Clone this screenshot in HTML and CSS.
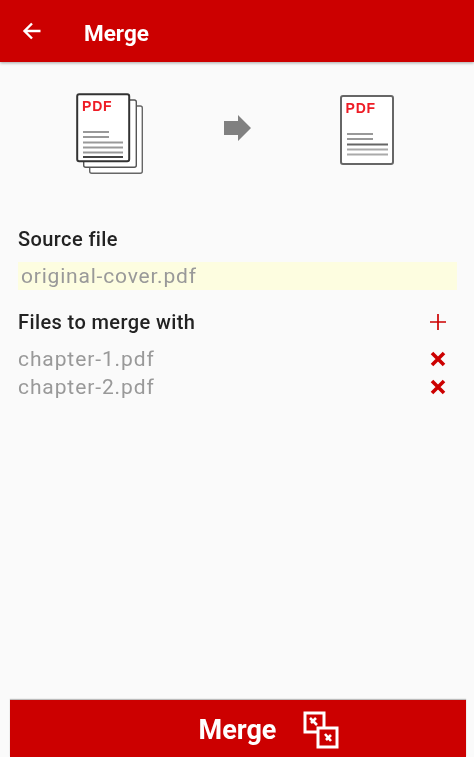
FILE: index.html
```html
<!DOCTYPE html>
<html lang="en">
<head>
<meta charset="utf-8">
<title>Merge</title>
<link rel="stylesheet" href="styles.css">
</head>
<body>
<div class="page">
  <header class="appbar">
    <svg class="back" viewBox="0 0 20 20" width="20" height="20"><path d="M18.500 10H3M10 2.500L2.500 10l7.500 7.500" fill="none" stroke="#fff" stroke-width="2.400"/></svg>
    <h1 class="title">Merge</h1>
  </header>
  <main class="content">
    <div class="diagram">
      <svg class="stack" viewBox="0 0 68 82" width="68" height="82">
        <rect x="13.700" y="13" width="52.600" height="67.200" rx="2" fill="#fff" stroke="#666" stroke-width="1.400"/>
        <rect x="7.700" y="7" width="52.600" height="67.200" rx="2" fill="#fff" stroke="#555" stroke-width="1.400"/>
        <rect x="1.200" y="1.200" width="52" height="67" rx="2" fill="#fff" stroke="#333" stroke-width="2"/>
        <text class="pdf" x="6" y="18">PDF</text>
        <path d="M7 39h26M7 44h26M7 49.500h40M7 54.500h40" stroke="#999" stroke-width="2.200"/>
        <path d="M7 59.500h40" stroke="#999" stroke-width="2"/>
        <path d="M7 64h40" stroke="#444" stroke-width="1.800"/>
      </svg>
      <svg class="arrow" viewBox="0 0 28 82" width="28" height="82">
        <path d="M0 28h14v-6l13 13-13 13v-6H0z" fill="#808080"/>
      </svg>
      <svg class="single" viewBox="0 0 54 82" width="54" height="82">
        <rect x="1" y="3" width="52" height="68" rx="2" fill="#fff" stroke="#666" stroke-width="2"/>
        <text class="pdf" x="5.500" y="20">PDF</text>
        <path d="M7 41h26M7 46h26" stroke="#999" stroke-width="2"/>
        <path d="M7 51.500h41" stroke="#666" stroke-width="2"/>
        <path d="M7 56.500h41M7 61.500h41" stroke="#aaa" stroke-width="2.200"/>
      </svg>
    </div>
    <section class="source">
      <h2 class="label">Source file</h2>
      <div class="source-file">original-cover.pdf</div>
    </section>
    <section class="files">
      <div class="row">
        <h2 class="label">Files to merge with</h2>
        <svg class="icon" viewBox="0 0 16 16" width="16" height="16"><path d="M8 0v16M0 8h16" stroke="#cc0000" stroke-width="1.700"/></svg>
      </div>
      <div class="row file">
        <span>chapter-1.pdf</span>
        <svg class="icon" viewBox="0 0 16 16" width="16" height="16"><path d="M2 2l12 12M14 2L2 14" stroke="#cc0000" stroke-width="3.600"/></svg>
      </div>
      <div class="row file">
        <span>chapter-2.pdf</span>
        <svg class="icon" viewBox="0 0 16 16" width="16" height="16"><path d="M2 2l12 12M14 2L2 14" stroke="#cc0000" stroke-width="3.600"/></svg>
      </div>
    </section>
  </main>
  <button class="merge" type="button">
    <span>Merge</span>
    <svg viewBox="0 0 36 38" width="36" height="38" fill="none" stroke="#fff">
      <rect x="2" y="2" width="19" height="19" stroke-width="3"/>
      <rect x="15" y="17" width="19" height="19" fill="#cc0000" stroke-width="3"/>
      <path d="M7 7l7 7M8 12l5-5M22 23l6 7M23 29l5-5" stroke-width="2.600"/>
    </svg>
  </button>
</div>
</body>
</html>
```
FILE: styles.css
```css
* { box-sizing: border-box; }
html, body { margin: 0; height: 100%; }
body { background: #fafafa; overflow: hidden; }
.page {
  height: 757px;
  display: flex;
  flex-direction: column;
  font-family: Roboto, "Liberation Sans", sans-serif;
  filter: blur(0.7px);
}
.appbar {
  height: 62px;
  flex: none;
  display: flex;
  align-items: center;
  gap: 42px;
  padding: 0 0 0 22px;
  background: #cc0000;
  box-shadow: 0 1px 3px rgba(0, 0, 0, 0.35);
}
.back { margin-top: -1px; }
.title {
  margin: 4px 0 0;
  color: #fff;
  font-size: 22.500px;
  font-weight: 700;
  line-height: 62px;
}
.content { flex: 1; padding: 31px 17px 0 18px; }
.diagram {
  display: flex;
  gap: 80px;
  margin: 0 0 0 58px;
  height: 82px;
}
.single { margin-left: 8px; }
.pdf { font: 700 14px "Liberation Sans", sans-serif; fill: #ee1c25; letter-spacing: 0.800px; }
.source { margin-top: 53px; }
.label {
  margin: 0;
  font-size: 20px;
  line-height: 22px;
  font-weight: 500;
  letter-spacing: 0.400px;
  color: #222;
}
.source-file {
  height: 28px;
  margin-top: 12px;
  padding-left: 3px;
  background: #fdfde0;
  color: #999;
  font-size: 21px;
  letter-spacing: 0.800px;
  line-height: 28px;
}
.files { margin-top: 21px; }
.row {
  display: flex;
  justify-content: space-between;
  align-items: center;
  padding-right: 11px;
}
.row:first-child { margin-bottom: 12px; }
.file {
  height: 28px;
  color: #999;
  font-size: 21px;
  letter-spacing: 0.900px;
}
.merge {
  flex: none;
  height: 57px;
  margin: 0 8px 0 10px;
  border: 0;
  padding: 2px 0 0 62px;
  display: flex;
  align-items: center;
  justify-content: center;
  gap: 27px;
  background: #cc0000;
  color: #fff;
  font: 700 27px Roboto, "Liberation Sans", sans-serif;
  box-shadow: 0 -1px 1px rgba(0, 0, 0, 0.25);
}
```
